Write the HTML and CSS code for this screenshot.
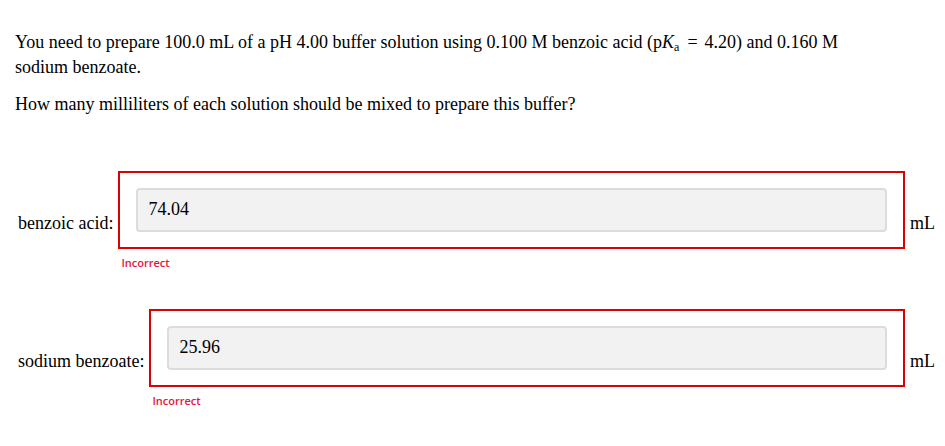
FILE: index.html
```html
<!DOCTYPE html>
<html>
<head>
<meta charset="utf-8">
<link rel="stylesheet" href="styles.css">
</head>
<body>
<div class="question">
  <p class="para para-first">You need to prepare 100.0 mL of a pH 4.00 buffer solution using 0.100 M benzoic acid (p<i class="var">K</i><sub class="sub">a</sub><span class="eq">=</span>4.20) and 0.160 M sodium benzoate.</p>
  <p class="para para-second">How many milliliters of each solution should be mixed to prepare this buffer?</p>

  <div class="row row-first">
    <div class="label">benzoic acid:</div>
    <div class="group">
      <div class="box"><input class="field" type="text" value="74.04"></div>
      <div class="status">Incorrect</div>
    </div>
    <div class="unit">mL</div>
  </div>

  <div class="row row-second">
    <div class="label">sodium benzoate:</div>
    <div class="group">
      <div class="box"><input class="field" type="text" value="25.96"></div>
      <div class="status">Incorrect</div>
    </div>
    <div class="unit">mL</div>
  </div>
</div>
</body>
</html>
```
FILE: styles.css
```css
html, body {
  margin: 0;
  padding: 0;
  background: #ffffff;
}

body {
  font-family: "Liberation Serif", "Times New Roman", serif;
  font-size: 18px;
  line-height: 25px;
  color: #000000;
}

.question {
  padding: 30px 10px 0 15px;
}

.para {
  margin: 0;
  padding-right: 60px;
}

.para-second {
  margin-top: 12px;
}

.var {
  font-style: italic;
}

.sub {
  font-size: 12px;
  line-height: 1;
  vertical-align: -3px;
}

.eq {
  margin: 0 7px 0 8px;
}

.row {
  display: flex;
  align-items: flex-start;
  gap: 5px;
  padding-left: 3px;
}

.row-first {
  margin-top: 54px;
}

.row-second {
  margin-top: 39px;
}

.label,
.unit {
  margin-top: 40px;
  white-space: nowrap;
}

.group {
  flex: 1;
  min-width: 0;
}

.box {
  border: 2px solid #dd0000;
  padding: 15px 16px 15px 16px;
}

.field {
  display: block;
  box-sizing: border-box;
  width: 100%;
  height: 44px;
  margin: 0;
  padding: 0 10px 2px 10px;
  border: 2px solid #dcdcdc;
  border-radius: 4px;
  background: #f2f2f2;
  font-family: "Liberation Serif", "Times New Roman", serif;
  font-size: 18px;
  color: #000000;
  outline: none;
}

.status {
  margin-top: 6px;
  padding-left: 3px;
  font-family: "Open Sans", "Liberation Sans", sans-serif;
  font-weight: 600;
  font-size: 11px;
  line-height: 15px;
  color: #e2153d;
}
```
